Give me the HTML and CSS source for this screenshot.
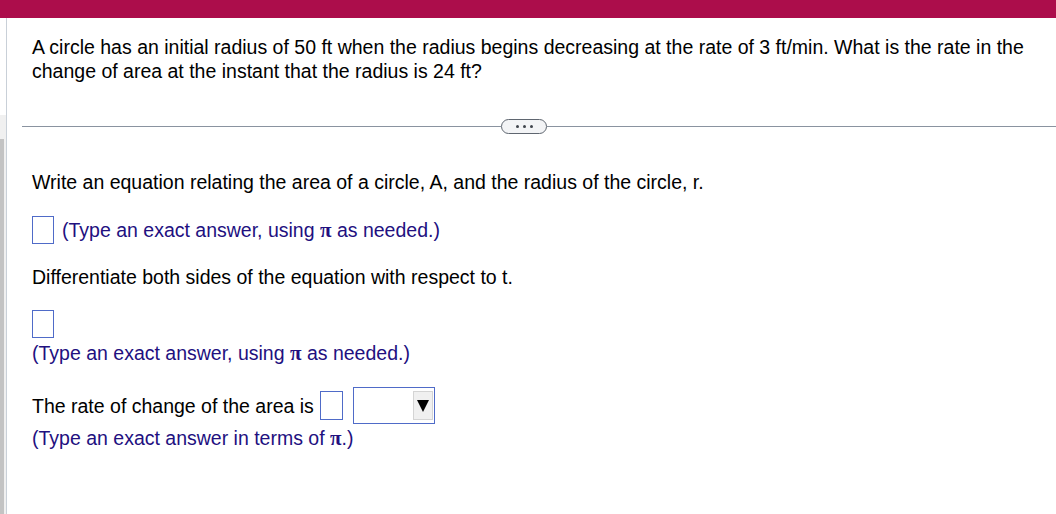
FILE: index.html
```html
<!DOCTYPE html>
<html>
<head>
<meta charset="utf-8">
<link rel="stylesheet" href="styles.css">
</head>
<body>
<div class="topbar"></div>
<div class="page">
  <div class="side"><div class="side-top"></div><div class="side-bottom"></div></div>
  <div class="main">
    <div class="question">A circle has an initial radius of 50 ft when the radius begins decreasing at the rate of 3 ft/min. What is the rate in the change of area at the instant that the radius is 24 ft?</div>
    <div class="divider">
      <div class="rule rule-left"></div>
      <div class="pill"><span></span><span></span><span></span></div>
      <div class="rule"></div>
    </div>
    <div class="work">
      <p class="step">Write an equation relating the area of a circle, A, and the radius of the circle, r.</p>
      <div class="answer-row">
        <span class="box"></span>
        <span class="hint">(Type an exact answer, using <span class="pi">π</span> as needed.)</span>
      </div>
      <p class="step step2">Differentiate both sides of the equation with respect to t.</p>
      <div class="answer-block">
        <span class="box"></span>
        <span class="hint">(Type an exact answer, using <span class="pi">π</span> as needed.)</span>
      </div>
      <div class="final">
        <div class="final-row">
          <span class="step">The rate of change of the area is</span>
          <span class="box small"></span>
          <span class="select"><span class="arrow"><svg width="12" height="14" viewBox="0 0 12 14"><polygon points="0,1 12,1 6,13" fill="#000"/></svg></span></span>
        </div>
        <span class="hint">(Type an exact answer in terms of <span class="pi">π</span>.)</span>
      </div>
    </div>
  </div>
</div>
</body>
</html>
```
FILE: styles.css
```css
html, body {
  margin: 0;
  padding: 0;
  background: #fff;
  font-family: "Liberation Sans", Arial, sans-serif;
  font-size: 19.5px;
  color: #000;
}
.topbar {
  height: 18px;
  background: #ac0d4b;
}
.page {
  display: flex;
  min-height: 496px;
}
.side {
  width: 6px;
  border-right: 1px solid #c9d0d8;
  display: flex;
  flex-direction: column;
}
.side-top {
  height: 97px;
  background: #fff;
}
.side-bottom {
  flex: 1;
  background: linear-gradient(to bottom, #f0f0f0 0, #f0f0f0 24px, transparent 24px),
              linear-gradient(to right, #c3c3c3 0, #c3c3c3 4px, #f0f0f0 4px);
}
.main {
  flex: 1;
  padding-left: 15px;
}
.question {
  padding: 17px 0 0 10px;
  line-height: 24px;
  height: 79px;
  max-width: 1005px;
}
.divider {
  display: flex;
  align-items: center;
  height: 16px;
  margin-top: 4px;
}
.rule {
  flex: 1;
  height: 1px;
  background: #8a93a0;
}
.rule-left {
  flex: 0 0 479px;
}
.pill {
  width: 44px;
  height: 13px;
  border: 1px solid #5f6670;
  border-radius: 8px;
  background: #f3f4f6;
  display: flex;
  align-items: center;
  justify-content: center;
  gap: 4px;
}
.pill span {
  width: 3px;
  height: 3px;
  border-radius: 50%;
  background: #3f444b;
}
.work {
  padding-left: 10px;
  padding-top: 36px;
}
.step {
  margin: 0;
  line-height: 24px;
}
.answer-row {
  display: flex;
  align-items: center;
  gap: 8px;
  margin-top: 22px;
}
.box {
  display: inline-block;
  width: 20px;
  height: 26px;
  border: 1px solid #4f6bc8;
  background: #fff;
}
.box.small {
  width: 21px;
  height: 27px;
}
.hint {
  color: #22107f;
  line-height: 24px;
}
.pi {
  font-family: "Liberation Serif", "Times New Roman", serif;
  font-size: 21px;
  font-weight: bold;
}
.step2 {
  margin-top: 21px;
}
.answer-block {
  display: flex;
  flex-direction: column;
  align-items: flex-start;
  margin-top: 21px;
}
.answer-block .hint {
  margin-top: 3px;
}
.final {
  margin-top: 22px;
  display: flex;
  flex-direction: column;
  gap: 2px;
}
.final-row {
  display: flex;
  align-items: center;
  height: 37px;
}
.final-row .box {
  margin-left: 6px;
}
.select {
  width: 79px;
  height: 35px;
  border: 1px solid #4f6bc8;
  display: flex;
  align-items: center;
  justify-content: flex-end;
  padding-right: 1px;
  margin-left: 10px;
}
.arrow {
  width: 20px;
  height: 29px;
  background: #f0f0f0;
  border: 1px solid #d4d4d4;
  box-sizing: border-box;
  display: flex;
  align-items: center;
  justify-content: center;
}
```
